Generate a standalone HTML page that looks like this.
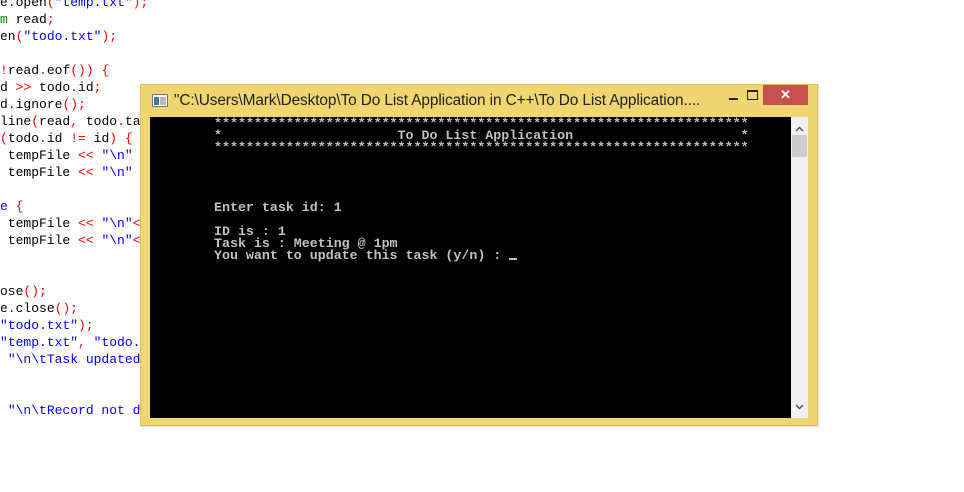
<!DOCTYPE html>
<html><head><meta charset="utf-8"><style>
body{margin:0;width:964px;height:492px;background:#fff;position:relative;overflow:hidden}
.code{position:absolute;left:0;top:-6px;font-family:"Liberation Mono",monospace;font-size:13px;line-height:17px;white-space:pre;color:#000}
.r{color:#f00}.b{color:#00f}.g{color:#080}
.win{position:absolute;left:140px;top:84px;width:676px;height:340px;background:#efd670;border:1px solid #d9c060;box-shadow:1px 1px 2px rgba(0,0,0,.15)}
.title{position:absolute;left:33px;top:7px;font-family:"Liberation Sans",sans-serif;font-size:15.4px;color:#222;white-space:nowrap;letter-spacing:-0.1px}
.con{position:absolute;left:9px;top:32px;width:641px;height:301px;background:#000}
.txt{position:absolute;left:64px;top:1px;font-family:"Liberation Mono",monospace;font-size:13.3px;line-height:12px;color:#c0c0c0;white-space:pre;font-weight:bold}
.sb{position:absolute;left:650px;top:32px;width:17px;height:301px;background:#f0f0f0}
.close{position:absolute;left:622px;top:0;width:45px;height:20px;background:#c7504f;color:#fff;text-align:center;font:bold 13px "Liberation Sans",sans-serif;line-height:20px}
</style></head><body>
<div class="code">e<span class="r">.</span>open<span class="r">(</span><span class="b">"temp.txt"</span><span class="r">);</span>
<span class="g">m</span> read<span class="r">;</span>
en<span class="r">(</span><span class="b">"todo.txt"</span><span class="r">);</span>

<span class="r">!</span>read<span class="r">.</span>eof<span class="r">())</span> <span class="r">{</span>
d <span class="r">&gt;&gt;</span> todo<span class="r">.</span>id<span class="r">;</span>
d<span class="r">.</span>ignore<span class="r">();</span>
line<span class="r">(</span>read<span class="r">,</span> todo<span class="r">.</span>ta
<span class="r">(</span>todo<span class="r">.</span>id <span class="r">!=</span> id<span class="r">)</span> <span class="r">{</span>
 tempFile <span class="r">&lt;&lt;</span> <span class="b">"\n"</span>
 tempFile <span class="r">&lt;&lt;</span> <span class="b">"\n"</span>

<span class="b">e</span> <span class="r">{</span>
 tempFile <span class="r">&lt;&lt;</span> <span class="b">"\n"</span><span class="r">&lt;</span>
 tempFile <span class="r">&lt;&lt;</span> <span class="b">"\n"</span><span class="r">&lt;</span>


ose<span class="r">();</span>
e<span class="r">.</span>close<span class="r">();</span>
<span class="b">"todo.txt"</span><span class="r">);</span>
<span class="b">"temp.txt"</span><span class="r">,</span> <span class="b">"todo.</span>
 <span class="b">"\n\tTask updated</span>


 <span class="b">"\n\tRecord not d</span></div>
<div class="win">
<svg style="position:absolute;left:11px;top:9px" width="16" height="13"><rect x="0.5" y="0.5" width="15" height="12" fill="#fff" stroke="#777"/><rect x="2" y="3" width="5" height="8" fill="#3a7a9a"/><rect x="8" y="3" width="6" height="8" fill="#bbb"/></svg>
<div class="title">"C:\Users\Mark\Desktop\To Do List Application in C++\To Do List Application....</div>
<div style="position:absolute;left:588px;top:13px;width:9px;height:2px;background:#222"></div>
<div style="position:absolute;left:606px;top:5px;width:9px;height:7px;border:1px solid #222;border-top-width:2px"></div>
<div class="close">✕</div>
<div class="con"><div class="txt">*******************************************************************
*                      To Do List Application                     *
*******************************************************************




Enter task id: 1

ID is : 1
Task is : Meeting @ 1pm
You want to update this task (y/n) : <span style="display:inline-block;width:8px;height:2px;background:#c0c0c0;vertical-align:-1px"></span></div></div>
<div class="sb">
<svg style="position:absolute;left:4px;top:9px" width="9" height="6"><path d="M1 5 L4.5 1.5 L8 5" fill="none" stroke="#555" stroke-width="1.5"/></svg>
<div style="position:absolute;left:1px;top:18px;width:15px;height:22px;background:#cdcdcd"></div>
<svg style="position:absolute;left:4px;top:287px" width="9" height="6"><path d="M1 1 L4.5 4.5 L8 1" fill="none" stroke="#555" stroke-width="1.5"/></svg>
</div>
</div>
</body></html>
